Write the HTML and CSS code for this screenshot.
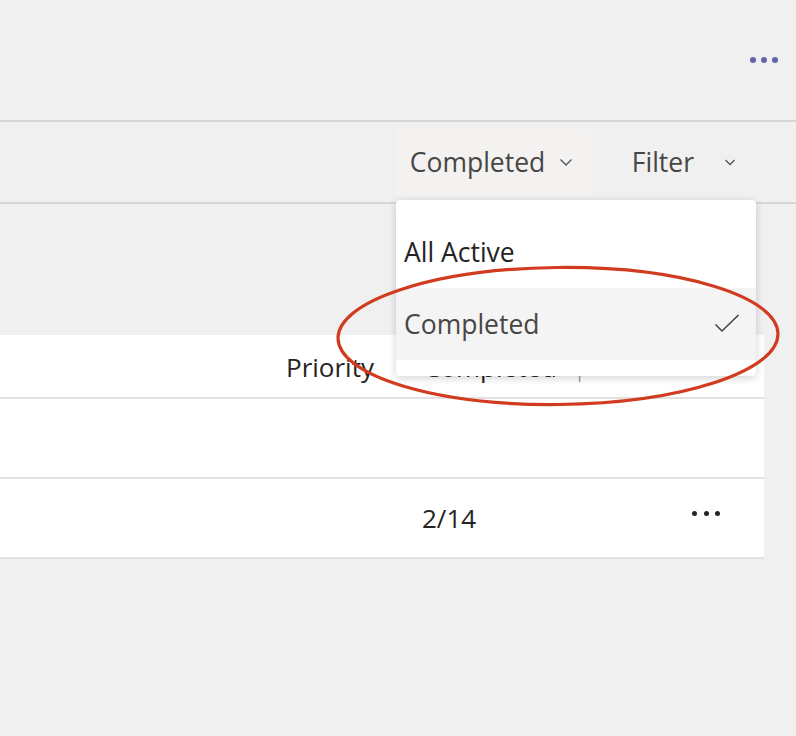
FILE: index.html
```html
<!DOCTYPE html>
<html>
<head>
  <title>Tasks</title>
  <link rel="stylesheet" href="styles.css">
</head>
<body>
  <div class="topbar">
    <span class="more-dots">
      <i></i><i></i><i></i>
    </span>
  </div>

  <div class="toolbar">
    <div class="view-btn is-open">
      <span>Completed</span>
      <svg class="chevron" width="14" height="10" viewBox="0 0 14 10"><path d="M1.5 2.5 L7 8 L12.5 2.5" fill="none" stroke="#555" stroke-width="1.3"/></svg>
    </div>
    <div class="view-btn filter-btn">
      <span>Filter</span>
      <svg class="chevron" width="14" height="10" viewBox="0 0 14 10"><path d="M2.5 3 L7 7.5 L11.5 3" fill="none" stroke="#555" stroke-width="1.3"/></svg>
    </div>
  </div>

  <div class="content">
    <div class="task-table">
      <div class="row head">
        <span class="col-priority">Priority</span>
        <span class="col-done">Completed <span class="sort-mark">|</span></span>
        <span class="col-menu"></span>
      </div>
      <div class="row"></div>
      <div class="row">
        <span class="col-priority"></span>
        <span class="col-done">2/14</span>
        <span class="col-menu row-dots"><i></i><i></i><i></i></span>
      </div>
    </div>
  </div>

  <div class="menu">
    <div class="menu-item">All Active</div>
    <div class="menu-item selected">
      <span>Completed</span>
      <svg width="26" height="20" viewBox="0 0 26 20"><path d="M1.5 10.5 L8 17 L24.5 1" fill="none" stroke="#444" stroke-width="1.6"/></svg>
    </div>
  </div>

  <svg class="callout" width="796" height="736" viewBox="0 0 796 736">
    <ellipse cx="558" cy="336" rx="220" ry="68.5" fill="none" stroke="#d13b1f" stroke-width="3.2" transform="rotate(-0.6 558 336)"/>
  </svg>
</body>
</html>
```

FILE: styles.css
```css
body {
  margin: 0;
  background: #f0f0f0;
  font-family: "Open Sans", "Noto Sans", sans-serif;
  color: #252423;
  width: 796px;
  height: 736px;
  overflow: hidden;
  position: relative;
}

.topbar {
  height: 120px;
  display: flex;
  justify-content: flex-end;
  align-items: center;
  padding-right: 18px;
  border-bottom: 2px solid #d6d6d6;
}
.more-dots {
  display: flex;
  gap: 5px;
}
.more-dots i {
  width: 6px;
  height: 6px;
  border-radius: 50%;
  background: #6264a7;
}

.toolbar {
  height: 80px;
  display: flex;
  justify-content: flex-end;
  align-items: center;
  padding-right: 59px;
  border-bottom: 2px solid #d6d6d6;
}
.view-btn {
  display: flex;
  align-items: center;
  font-size: 26.5px;
  color: #484644;
  height: 69px;
  padding: 0 15px;
  box-sizing: border-box;
  border-radius: 3px;
}
.view-btn.is-open {
  background: #f3f2f1;
  width: 197px;
  margin-right: 40px;
}
.view-btn .chevron {
  margin-left: 14px;
}
.filter-btn {
  padding: 0;
}
.filter-btn .chevron {
  margin-left: 29px;
}

.content {
  padding-top: 131px;
}
.task-table {
  width: 764px;
  background: #fff;
}
.row {
  height: 78px;
  display: flex;
  align-items: center;
  border-bottom: 2px solid #e1e1e1;
  font-size: 26px;
}
.row.head {
  height: 62px;
}
.row.head span {
  position: relative;
  top: 1px;
}
.col-priority {
  margin-left: 286px;
  width: 136px;
}
.col-done {
  width: 270px;
}
.row.head .col-priority {
  width: 138px;
}
.sort-mark {
  font-size: 14px;
  color: #777;
  margin-left: 12px;
}
.row-dots {
  display: flex;
  gap: 6.5px;
  position: relative;
  top: -5px;
}
.row-dots i {
  width: 5px;
  height: 5px;
  border-radius: 50%;
  background: #252423;
}

.menu {
  position: absolute;
  left: 396px;
  top: 200px;
  width: 360px;
  height: 176px;
  background: #fff;
  border-radius: 4px;
  box-shadow: 0 2px 8px rgba(0, 0, 0, 0.18);
  padding-top: 16px;
  box-sizing: border-box;
}
.menu-item {
  height: 72px;
  display: flex;
  align-items: center;
  justify-content: space-between;
  padding: 0 16px 0 8px;
  font-size: 26.5px;
}
.menu-item.selected {
  background: #f4f4f4;
  color: #484644;
}

.callout {
  position: absolute;
  left: 0;
  top: 0;
  pointer-events: none;
}
```
